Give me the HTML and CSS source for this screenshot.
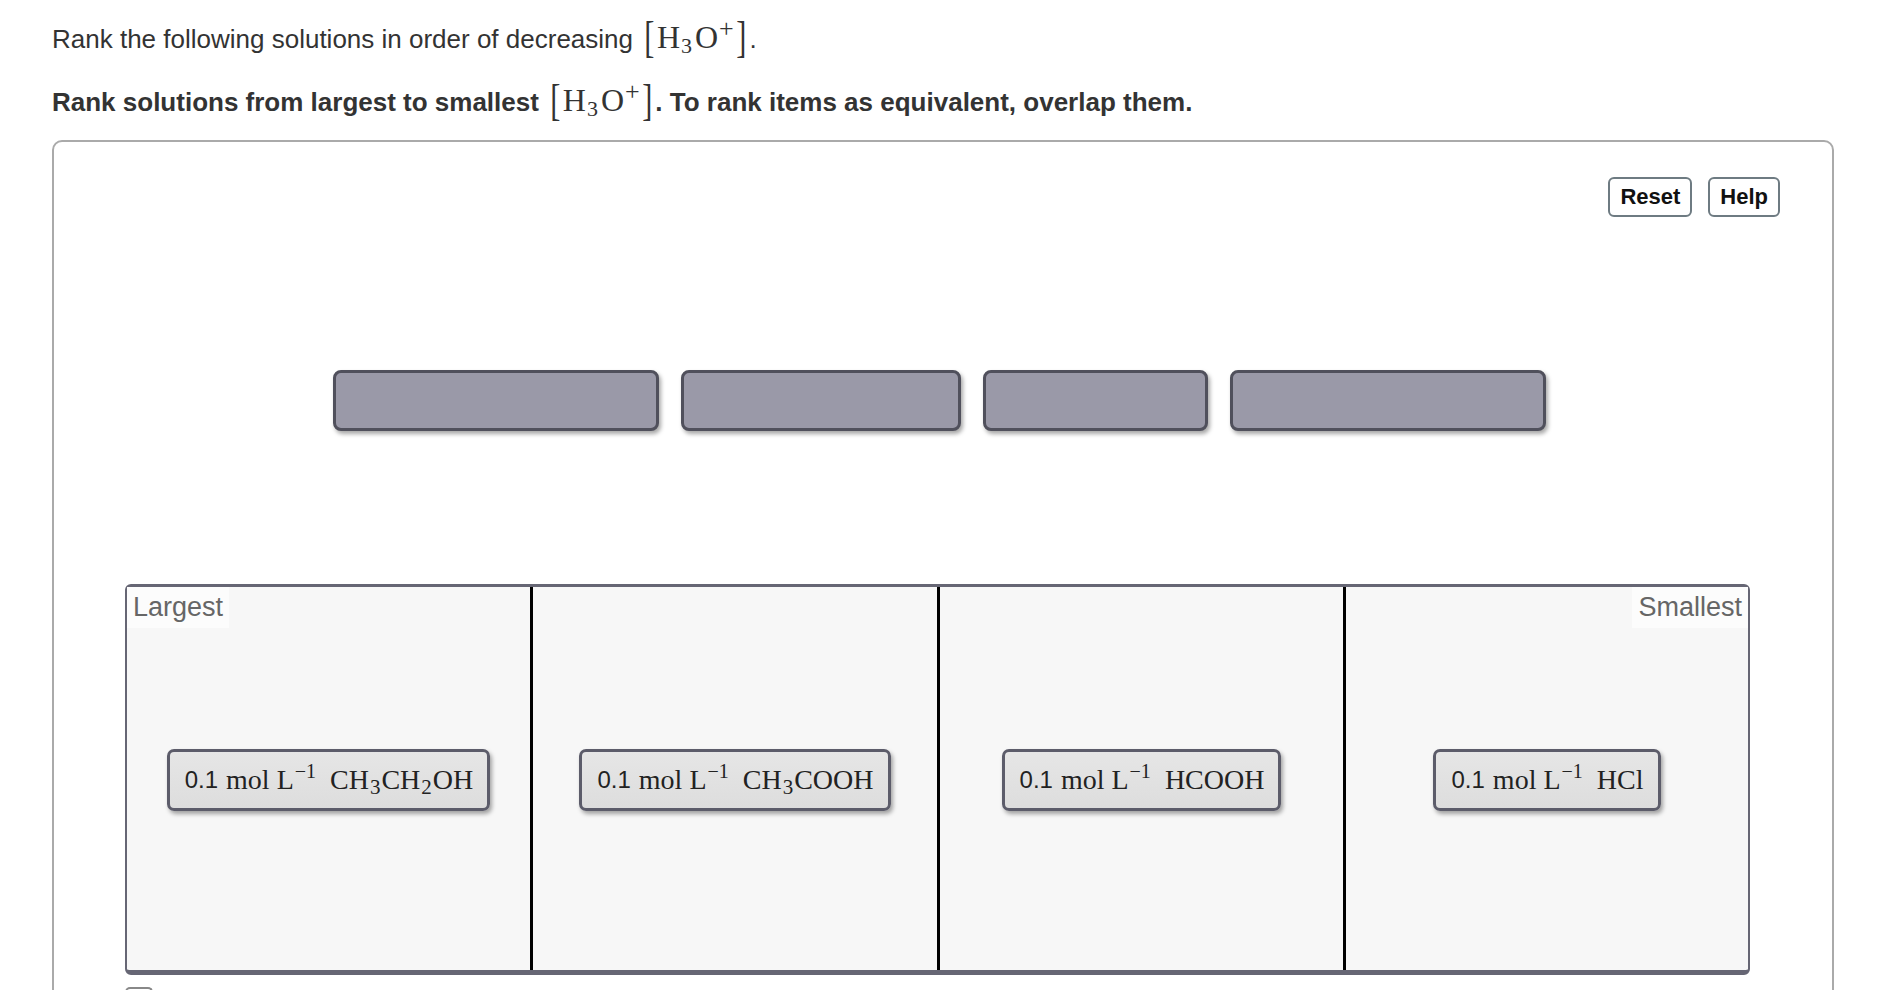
FILE: index.html
```html
<!DOCTYPE html>
<html lang="en">
<head>
<meta charset="utf-8">
<title>Rank solutions</title>
<link rel="stylesheet" href="styles.css">
</head>
<body>
<div class="page">
  <p class="q q1">Rank the following solutions in order of decreasing <span class="math"><span class="br">[</span>H<sub>3</sub>O<sup>+</sup><span class="br">]</span></span>.</p>
  <p class="q q2">Rank solutions from largest to smallest <span class="math"><span class="br">[</span>H<sub>3</sub>O<sup>+</sup><span class="br">]</span></span>. To rank items as equivalent, overlap them.</p>
  <div class="panel">
    <div class="toolbar">
      <button class="btn">Reset</button>
      <button class="btn">Help</button>
    </div>
    <div class="pool">
      <div class="slot s1"></div>
      <div class="slot s2"></div>
      <div class="slot s3"></div>
      <div class="slot s4"></div>
    </div>
    <div class="rank">
      <div class="col">
        <span class="lbl lbl-l">Largest</span>
        <div class="card"><span class="num">0.1</span>mol L<sup>−1</sup><span class="sp"></span>CH<sub>3</sub>CH<sub>2</sub>OH</div>
      </div>
      <div class="col">
        <div class="card"><span class="num">0.1</span>mol L<sup>−1</sup><span class="sp"></span>CH<sub>3</sub>COOH</div>
      </div>
      <div class="col">
        <div class="card"><span class="num">0.1</span>mol L<sup>−1</sup><span class="sp"></span>HCOOH</div>
      </div>
      <div class="col">
        <span class="lbl lbl-r">Smallest</span>
        <div class="card"><span class="num">0.1</span>mol L<sup>−1</sup><span class="sp"></span>HCl</div>
      </div>
    </div>
    <div class="peek"></div>
  </div>
</div>
</body>
</html>
```

FILE: styles.css
```css
html, body {
  margin: 0;
  background: #fff;
  overflow: hidden;
}
body {
  font-family: "Liberation Sans", Arial, sans-serif;
  color: #333;
}
.page {
  padding: 17px 44px 0 52px;
}
.q {
  margin: 0;
  height: 40px;
  line-height: 40px;
  font-size: 26px;
  white-space: nowrap;
}
.q2 {
  margin-top: 23px;
  font-weight: bold;
}
.math {
  font-family: "Liberation Serif", "Times New Roman", serif;
  font-size: 32px;
  font-weight: normal;
  color: #333;
  margin: 0 1px 0 2px;
}
.math sub {
  font-size: 22px;
  vertical-align: -5px;
  line-height: 0;
  margin: 0 3px 0 1px;
}
.math sup {
  font-size: 26px;
  vertical-align: 11px;
  line-height: 0;
  margin-left: 1px;
}
.br {
  display: inline-block;
  transform: scale(0.95, 1.4);
  margin: 0 2px;
}
.panel {
  margin-top: 20px;
  border: 2px solid #aaa;
  border-radius: 10px;
  height: 900px;
  box-sizing: border-box;
}
.toolbar {
  display: flex;
  justify-content: flex-end;
  gap: 16px;
  padding: 35px 52px 0 0;
}
.btn {
  height: 40px;
  box-sizing: border-box;
  border: 2px solid #6e7b82;
  border-radius: 6px;
  background: #fff;
  font: bold 22px "Liberation Sans", Arial, sans-serif;
  color: #111;
  padding: 0 10px;
}
.pool {
  display: flex;
  justify-content: center;
  gap: 22px;
  margin-top: 153px;
  padding-right: 8px;
}
.slot {
  height: 61px;
  box-sizing: border-box;
  background: #9a99a8;
  border: 3px solid #50505c;
  border-radius: 8px;
  box-shadow: 2px 3px 4px rgba(0, 0, 0, 0.35);
}
.s1 { width: 326px; }
.s2 { width: 280px; }
.s3 { width: 225px; }
.s4 { width: 316px; }
.rank {
  margin: 153px 82px 0 71px;
  height: 391px;
  box-sizing: border-box;
  background: #f7f7f7;
  border: 2px solid #666674;
  border-top-width: 3px;
  border-bottom-width: 5px;
  border-radius: 6px;
  display: grid;
  grid-template-columns: 403px 407px 406px 1fr;
}
.col {
  position: relative;
  display: flex;
  align-items: center;
  justify-content: center;
}
.col + .col {
  border-left: 3px solid #000;
}
.lbl {
  position: absolute;
  top: 0;
  font-size: 27px;
  line-height: 33px;
  color: #666;
  background: #fcfcfc;
  padding: 4px 6px;
}
.lbl-l { left: 0; }
.lbl-r { right: 0; }
.card {
  height: 62px;
  margin-top: 2px;
  box-sizing: border-box;
  padding: 0 14px 0 15px;
  display: flex;
  align-items: center;
  background: linear-gradient(#e6e6e6, #dddddd);
  border: 3px solid #5c5c6a;
  border-radius: 7px;
  box-shadow: 2px 3px 4px rgba(0, 0, 0, 0.35);
  font-family: "Liberation Serif", "Times New Roman", serif;
  font-size: 28px;
  color: #222;
  white-space: nowrap;
}
.num {
  font-family: "Liberation Sans", Arial, sans-serif;
  font-size: 24px;
  margin-right: 8px;
}
.card sup {
  font-size: 20px;
  position: relative;
  top: -8px;
  margin-left: 1px;
}
.card sub {
  font-size: 21px;
  position: relative;
  top: 8px;
  margin: 0 1px;
}
.sp {
  display: inline-block;
  width: 14px;
}
.peek {
  margin: 12px 0 0 71px;
  width: 24px;
  height: 12px;
  border: 2px solid #888;
  border-bottom: none;
  border-radius: 5px 5px 0 0;
}
```
